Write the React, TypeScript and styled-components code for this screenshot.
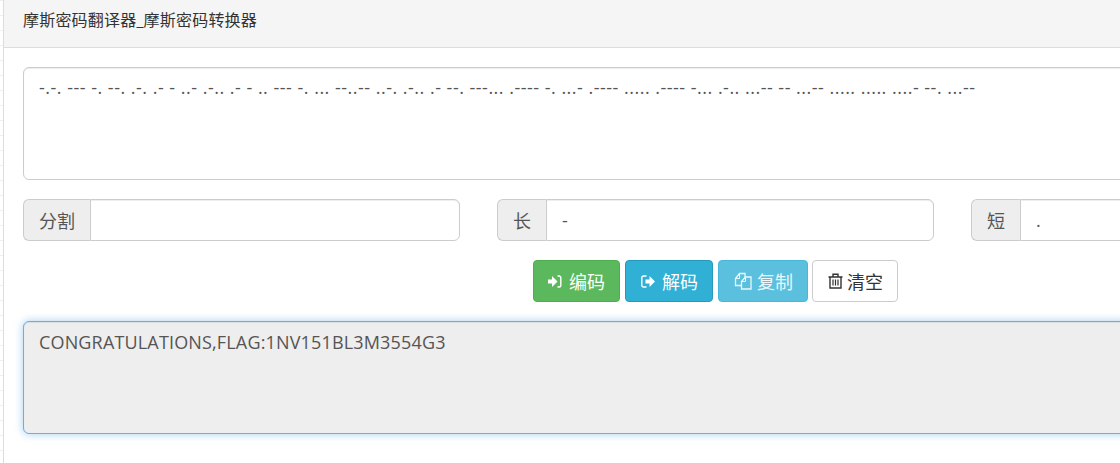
import styled, { createGlobalStyle } from 'styled-components'

const GlobalStyle = createGlobalStyle`
  html, body {
    margin: 0;
    height: 463px;
    overflow: hidden;
    background: #fff;
    color: #333;
    font-family: "Open Sans", "Noto Sans CJK SC", sans-serif;
  }
`

const MORSE =
  '-.-. --- -. --. .-. .- - ..- .-.. .- - .. --- -. ... --..-- ..-. .-.. .- --. ---... .---- -. ...- .---- ..... .---- -... .-.. ...-- -- ...-- ..... ..... ....- --. ...--'

const LogInIcon = () => (
  <Icon $w={16} viewBox="0 0 16 18">
    <path d="M-1 7.5h4V4l5.5 5.5L3 15v-3.5H-1z" fill="currentColor" />
    <path d="M8.5 4h1.5a1.8 1.8 0 0 1 1.8 1.8v7.4a1.8 1.8 0 0 1-1.8 1.8H8.5" fill="none" stroke="currentColor" strokeWidth="1.4" />
  </Icon>
)

const LogOutIcon = () => (
  <Icon $w={17} viewBox="0 0 17 18">
    <path d="M4.5 7.5h4V4l5.5 5.5L8.5 15v-3.5h-4z" fill="currentColor" />
    <path d="M5.5 4H2.6A1.8 1.8 0 0 0 .8 5.8v7.4A1.8 1.8 0 0 0 2.6 15h2.9" fill="none" stroke="currentColor" strokeWidth="1.4" />
  </Icon>
)

const CopyIcon = () => (
  <Icon $w={19} viewBox="0 0 19 18">
    <path d="M7 13.5H1.5V6.5L5.5 1.5h5.5V5" fill="none" stroke="currentColor" strokeWidth="1.3" />
    <path d="M5.5 1.5V6.5H1.5" fill="none" stroke="currentColor" strokeWidth="1" />
    <path d="M7.5 17V9.5l4-4.5h5.5V17z" fill="none" stroke="currentColor" strokeWidth="1.3" />
    <path d="M11.5 5V9.5H7.5" fill="none" stroke="currentColor" strokeWidth="1" />
  </Icon>
)

const TrashIcon = () => (
  <Icon $w={15} viewBox="0 0 15 18">
    <path d="M0.5 5h14M5 4.8V2.2h5v2.6M2 5V16h11V5" fill="none" stroke="currentColor" strokeWidth="1.4" />
    <path d="M5 7.5v6M7.5 7.5v6M10 7.5v6" fill="none" stroke="currentColor" strokeWidth="1.2" />
  </Icon>
)

const App = () => {
  return (
    <>
      <GlobalStyle />
      <Page>
        <Panel>
          <Heading>摩斯密码翻译器_摩斯密码转换器</Heading>
          <Body>
            <MorseArea readOnly value={MORSE} />
            <Options>
              <Group>
                <Addon>分割</Addon>
                <Field readOnly value="" />
              </Group>
              <Group>
                <Addon>长</Addon>
                <Field readOnly value="-" />
              </Group>
              <Group>
                <Addon>短</Addon>
                <Field readOnly value="." />
              </Group>
            </Options>
            <Actions>
              <Button $bg="#5cb85c" $border="#4cae4c" $color="#fff">
                <LogInIcon />
                编码
              </Button>
              <Button $bg="#31b0d5" $border="#269abc" $color="#fff">
                <LogOutIcon />
                解码
              </Button>
              <Button $bg="#5bc0de" $border="#46b8da" $color="#eaf7fb">
                <CopyIcon />
                复制
              </Button>
              <Button $bg="#fff" $border="#ccc" $color="#333">
                <TrashIcon />
                清空
              </Button>
            </Actions>
            <ResultArea readOnly value="CONGRATULATIONS,FLAG:1NV151BL3M3554G3" />
          </Body>
        </Panel>
      </Page>
    </>
  )
}

export default App

const Page = styled.div`
  width: 1427px;
  height: 463px;
  padding-left: 3px;
  box-sizing: border-box;
  background-color: #fff;
  background-image: repeating-linear-gradient(
    to bottom,
    #f0f0f0 0,
    #f0f0f0 1px,
    #fff 1px,
    #fff 15px
  );
`
const Panel = styled.div`
  height: 100%;
  background: #fff;
  border-left: 1px solid #ddd;
`
const Heading = styled.div`
  height: 47px;
  padding-left: 19px;
  line-height: 41px;
  font-size: 16px;
  letter-spacing: 0.2px;
  color: #333;
  background: #f5f5f5;
  border-bottom: 1px solid #ddd;
`
const Body = styled.div`
  display: flex;
  flex-direction: column;
  padding: 19px 19px 0;
`
const TextArea = styled.textarea`
  display: block;
  box-sizing: border-box;
  width: 1385px;
  height: 113px;
  padding: 7px 15px;
  font: 18px/1.42857 "Open Sans", "Noto Sans CJK SC", sans-serif;
  letter-spacing: 0.16px;
  color: #555;
  background: #fff;
  border: 1px solid #ccc;
  border-radius: 6px;
  box-shadow: inset 0 1px 1px rgba(0, 0, 0, 0.075);
  outline: none;
  resize: none;
`
const MorseArea = styled(TextArea)`
  letter-spacing: 0.49px;
`
const ResultArea = styled(TextArea)`
  margin-top: 19px;
  padding-top: 8px;
  background: #eee;
  border-color: #66afe9;
  box-shadow: inset 0 1px 1px rgba(0, 0, 0, 0.075), 0 0 8px rgba(102, 175, 233, 0.6);
`
const Options = styled.div`
  display: grid;
  grid-template-columns: repeat(3, 437px);
  column-gap: 37px;
  margin-top: 19px;
`
const Group = styled.div`
  display: flex;
  height: 42px;
`
const Addon = styled.span`
  display: flex;
  align-items: center;
  box-sizing: border-box;
  padding: 0 15px;
  font-size: 18px;
  color: #555;
  background: #eee;
  border: 1px solid #ccc;
  border-right: 0;
  border-radius: 6px 0 0 6px;
`
const Field = styled.input`
  flex: 1;
  min-width: 0;
  box-sizing: border-box;
  padding: 0 15px;
  font: 18px "Open Sans", "Noto Sans CJK SC", sans-serif;
  color: #555;
  background: #fff;
  border: 1px solid #ccc;
  border-radius: 0 6px 6px 0;
  box-shadow: inset 0 1px 1px rgba(0, 0, 0, 0.075);
  outline: none;
`
const Actions = styled.div`
  display: flex;
  justify-content: center;
  gap: 5px;
  margin-top: 19px;
`
const Button = styled.button<{ $bg: string; $border: string; $color: string }>`
  display: flex;
  align-items: center;
  gap: 4px;
  box-sizing: border-box;
  height: 42px;
  padding: 0 14px 0 15px;
  font: 18px "Noto Sans CJK SC", sans-serif;
  color: ${(p) => p.$color};
  background: ${(p) => p.$bg};
  border: 1px solid ${(p) => p.$border};
  border-radius: 4px;

  &:last-child {
    margin-left: -1px;
  }
`
const Icon = styled.svg<{ $w: number }>`
  width: ${(p) => p.$w}px;
  height: 18px;
  flex: none;
  overflow: visible;
`
